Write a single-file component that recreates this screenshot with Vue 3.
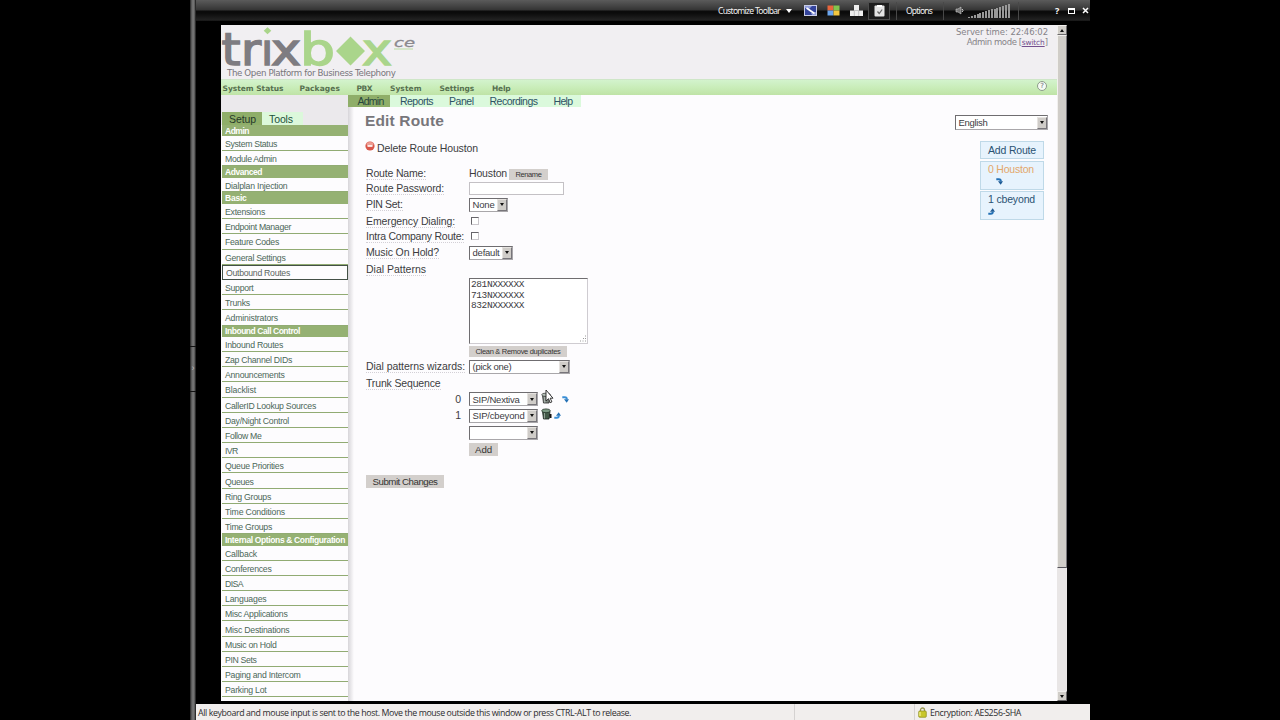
<template>
    <div class="desktop">
        <div class="dock">
            <div class="dock-handle">›</div>
        </div>
        <div class="viewer">
            <header class="toolbar">
                <span v-fit="62" class="tool-text">Customize Toolbar</span>
                <i class="caret"></i>
                <svg class="tool-icon first" viewBox="0 0 13 11">
                    <rect x=".5" y=".5" width="12" height="10" fill="#34449c" stroke="#c9cde6" />
                    <path d="M1 1h7L5 4 1 3zM12 10H8l-1-2 5-1z" fill="#8f9bd8" />
                    <path d="M2.500 3l8 5.500" stroke="#fff" stroke-width="1.6" />
                </svg>
                <svg class="tool-icon" viewBox="0 0 13 11">
                    <rect x=".5" y=".5" width="6" height="5" fill="#e8653c" />
                    <rect x="6.5" y=".5" width="6" height="5" fill="#82c44e" />
                    <rect x=".5" y="5.5" width="6" height="5" fill="#6ba6ee" />
                    <rect x="6.5" y="5.5" width="6" height="5" fill="#f2c640" />
                </svg>
                <svg class="tool-icon" viewBox="0 0 13 11">
                    <path d="M4 0h5v5.500H4zM0 5.500h13V11H0z" fill="#eee" />
                    <path d="M4.300 6v5M8.700 6v5M4 5.500h5" stroke="#a5a5a5" stroke-width=".6" />
                </svg>
                <div class="tool-active">
                    <svg class="clip-icon" viewBox="0 0 11 12">
                        <rect x=".5" y=".5" width="10" height="11" rx="1" fill="#e4e4e4" />
                        <rect x="3" y="0" width="5" height="2" fill="#fff" />
                        <path d="M3.500 6.500l1.700 2 3-4" fill="none" stroke="#666" stroke-width="1.2" />
                    </svg>
                </div>
                <i class="tool-sep sep-a"></i>
                <span v-fit="26" class="tool-text">Options</span>
                <i class="tool-sep sep-b"></i>
                <svg class="speaker" viewBox="0 0 9 9">
                    <path d="M1 3h2l3-2v7L3 6H1z" fill="#777" stroke="#ccc" stroke-width=".6" />
                    <path d="M7 3l1 1.500-1 1.500" fill="none" stroke="#ddd" />
                </svg>
                <div class="volume">
                    <i v-for="n in 15" :key="n" :style="{ height: n * 0.95 + 'px' }"></i>
                </div>
                <i class="tool-sep sep-c"></i>
                <b class="help-mark">?</b>
                <i class="win-max"></i>
                <svg class="win-close" viewBox="0 0 7 7">
                    <path d="M1 1l5 5M6 1L1 6" stroke="#fff" stroke-width="1.5" />
                </svg>
            </header>

            <div class="host">
                <div class="page">
                    <div class="banner">
                        <svg class="logo" width="200" height="40" viewBox="221 27 200 40">
                            <g class="logo-gray">
                                <text x="221.500" y="65" textLength="19" lengthAdjust="spacingAndGlyphs">t</text>
                                <text x="241" y="65" textLength="20" lengthAdjust="spacingAndGlyphs">r</text>
                                <text x="261" y="65">ı</text>
                                <text x="271" y="65" textLength="30" lengthAdjust="spacingAndGlyphs">x</text>
                            </g>
                            <g class="logo-green">
                                <text x="300" y="65" textLength="35" lengthAdjust="spacingAndGlyphs">b</text>
                                <text x="362" y="65" textLength="30" lengthAdjust="spacingAndGlyphs">x</text>
                            </g>
                            <path d="M350.500 36.500l14.500 14.500-14.500 14.500L336 51zM267.500 27.200l3.800 3.500-3.800 3.500-3.800-3.500z" fill="#aad58b" />
                            <text class="logo-ce" x="394" y="47" textLength="21" lengthAdjust="spacingAndGlyphs">ce</text>
                            <path d="M394 49h19" stroke="#b9dba0" />
                        </svg>
                        <div class="server">
                            <div><span v-fit="92">Server time: 22:46:02</span></div>
                            <div><span v-fit="55">Admin mode [</span><span v-fit="23" class="switch">switch</span>]</div>
                        </div>
                        <div class="tagline"><span v-fit="168.500">The Open Platform for Business Telephony</span></div>
                    </div>
                    <nav class="main-nav">
                        <div v-for="item in mainNav" :key="item.text" :style="{ width: item.cell + 'px' }">
                            <span v-fit="item.w">{{ item.text }}</span>
                        </div>
                        <i class="help-round">?</i>
                    </nav>

                    <div class="body">
                        <aside class="side">
                            <div class="side-tabs">
                                <div class="side-tab on"><span v-fit="27">Setup</span></div>
                                <div class="side-tab"><span v-fit="24">Tools</span></div>
                            </div>
                            <template v-for="group in groups" :key="group.title">
                                <div class="side-head" :style="{ height: group.head + 'px' }">
                                    <span v-fit="group.w">{{ group.title }}</span>
                                </div>
                                <div
                                    v-for="item in group.items"
                                    :key="item[0]"
                                    :class="['side-item', { current: item[0] === 'Outbound Routes' }]"
                                    :style="{ height: group.row + 'px' }"
                                >
                                    <span v-fit="item[1]">{{ item[0] }}</span>
                                </div>
                            </template>
                        </aside>

                        <main class="main">
                            <nav class="sub-nav">
                                <div class="on"><span v-fit="26">Admin</span></div>
                                <div><span v-fit="33">Reports</span></div>
                                <div><span v-fit="24.500">Panel</span></div>
                                <div><span v-fit="48">Recordings</span></div>
                                <div><span v-fit="19">Help</span></div>
                            </nav>
                            <div class="content">
                                <section class="edit">
                                    <h1><span v-fit="79">Edit Route</span></h1>
                                    <div class="delete">
                                        <svg width="10" height="10" viewBox="0 0 10 10">
                                            <circle cx="5" cy="5" r="4.600" fill="#d9564a" />
                                            <ellipse cx="5" cy="3" rx="3.500" ry="2" fill="#ee9d93" />
                                            <rect x="2.500" y="4.200" width="5" height="1.600" fill="#fff" />
                                        </svg>
                                        <span v-fit="101">Delete Route Houston</span>
                                    </div>

                                    <div class="row h15">
                                        <label><span v-fit="60" class="tip">Route Name:</span></label>
                                        <span v-fit="38">Houston</span>
                                        <button class="rename"><span v-fit="26">Rename</span></button>
                                    </div>
                                    <div class="row h15">
                                        <label><span v-fit="78" class="tip">Route Password:</span></label>
                                        <div class="input"></div>
                                    </div>
                                    <div class="row h17">
                                        <label><span v-fit="36.500" class="tip">PIN Set:</span></label>
                                        <div class="select w39"><span v-fit="22">None</span><i></i></div>
                                    </div>
                                    <div class="row h16">
                                        <label><span v-fit="89" class="tip">Emergency Dialing:</span></label>
                                        <div class="check"></div>
                                    </div>
                                    <div class="row h15">
                                        <label><span v-fit="98" class="tip">Intra Company Route:</span></label>
                                        <div class="check"></div>
                                    </div>
                                    <div class="row h17">
                                        <label><span v-fit="73" class="tip">Music On Hold?</span></label>
                                        <div class="select w44"><span v-fit="27">default</span><i></i></div>
                                    </div>
                                    <div class="row h16">
                                        <label><span v-fit="60" class="tip">Dial Patterns</span></label>
                                    </div>
                                    <div class="row h67">
                                        <label></label>
                                        <div class="textarea">
                                            <div v-for="p in patterns" :key="p"><span v-fit="53">{{ p }}</span></div>
                                            <svg width="8" height="8" viewBox="0 0 8 8">
                                                <path d="M6 1h1M4 3.500h1M6 3.500h1M1 6h1M3.500 6h1M6 6h1" stroke="#999" />
                                            </svg>
                                        </div>
                                    </div>
                                    <div class="row h14">
                                        <label></label>
                                        <button class="clean"><span v-fit="85">Clean &amp; Remove duplicates</span></button>
                                    </div>
                                    <div class="row h17">
                                        <label><span v-fit="99" class="tip">Dial patterns wizards:</span></label>
                                        <div class="select w101"><span v-fit="39">(pick one)</span><i></i></div>
                                    </div>
                                    <div class="row h16">
                                        <label><span v-fit="74.500" class="tip">Trunk Sequence</span></label>
                                    </div>
                                    <div class="row h16">
                                        <label class="num">0</label>
                                        <div class="select w69"><span v-fit="47">SIP/Nextiva</span><i></i></div>
                                        <svg class="trash" viewBox="0 0 12 12">
                                            <path d="M1.500 3.500h7.500l-1 7.500H2.500z" fill="#7d8780" stroke="#2a2a2a" stroke-width=".8" />
                                            <path d="M3.800 5v5.500" stroke="#ccd3ce" stroke-width=".8" />
                                            <ellipse cx="5" cy="2.800" rx="4.300" ry="1.700" fill="#b4c0b7" stroke="#444" stroke-width=".8" />
                                        </svg>
                                        <svg class="arrow down" viewBox="0 0 7 7">
                                            <path d="M.3 1.300h2.500c1.500 0 2 .7 2 2" fill="none" stroke="#3a8fd6" stroke-width="2" />
                                            <path d="M2 3.300h5L4.700 6.800z" fill="#2370b5" />
                                        </svg>
                                        <svg class="cursor" width="9" height="15" viewBox="0 0 9 15">
                                            <path d="M1 1v11l2.500-2.300 1.700 4 1.700-.8-1.700-3.700H8z" fill="#fff" stroke="#222" stroke-width=".9" />
                                        </svg>
                                    </div>
                                    <div class="row h17">
                                        <label class="num">1</label>
                                        <div class="select w69"><span v-fit="52">SIP/cbeyond</span><i></i></div>
                                        <svg class="trash" viewBox="0 0 12 12">
                                            <path d="M1.500 3.500h7.500l-1 7.500H2.500z" fill="#435a48" stroke="#1c251e" stroke-width=".8" />
                                            <path d="M3.500 5v5.500" stroke="#a6b3a9" stroke-width=".8" />
                                            <ellipse cx="5" cy="2.800" rx="4.300" ry="1.900" fill="#7d9b85" stroke="#27352b" stroke-width=".8" />
                                            <path d="M9.500 6v4" stroke="#111" stroke-width="2" />
                                        </svg>
                                        <svg class="arrow up" viewBox="0 0 7 7">
                                            <path d="M.3 5.700h2.500c1.500 0 2-.7 2-2" fill="none" stroke="#3a8fd6" stroke-width="2" />
                                            <path d="M2 3.700h5L4.700.2z" fill="#2370b5" />
                                        </svg>
                                    </div>
                                    <div class="row h17">
                                        <label></label>
                                        <div class="select w69"><span></span><i></i></div>
                                    </div>
                                    <div class="row h17">
                                        <label></label>
                                        <button class="add"><span v-fit="17">Add</span></button>
                                    </div>
                                    <button class="submit"><span v-fit="65">Submit Changes</span></button>
                                </section>

                                <section class="routes">
                                    <div class="select lang"><span v-fit="29">English</span><i></i></div>
                                    <div class="route new"><span v-fit="48">Add Route</span></div>
                                    <div class="route active">
                                        <span v-fit="46">0 Houston</span>
                                        <svg class="arrow" viewBox="0 0 7 7">
                                            <path d="M.3 1.300h2.500c1.500 0 2 .7 2 2" fill="none" stroke="#2370b5" stroke-width="2" />
                                            <path d="M2 3.300h5L4.700 6.800z" fill="#1d5a94" />
                                        </svg>
                                    </div>
                                    <div class="route">
                                        <span v-fit="47">1 cbeyond</span>
                                        <svg class="arrow" viewBox="0 0 7 7">
                                            <path d="M.3 5.700h2.500c1.500 0 2-.7 2-2" fill="none" stroke="#2370b5" stroke-width="2" />
                                            <path d="M2 3.700h5L4.700.2z" fill="#1d5a94" />
                                        </svg>
                                    </div>
                                </section>
                            </div>
                        </main>
                    </div>
                </div>
                <div class="scrollbar">
                    <i class="sb-btn up"></i>
                    <i class="sb-thumb"></i>
                    <i class="sb-btn down"></i>
                </div>
            </div>

            <footer class="status">
                <div class="status-msg"><span v-fit="433">All keyboard and mouse input is sent to the host. Move the mouse outside this window or press CTRL-ALT to release.</span></div>
                <div class="status-mid"></div>
                <div class="status-enc">
                    <svg width="9" height="11" viewBox="0 0 9 11">
                        <path d="M2.500 5V3a2 2 0 014 0v2" fill="none" stroke="#9a9a50" stroke-width="1.300" />
                        <rect x=".7" y="4" width="7.600" height="6.300" rx="1" fill="#c8c62c" stroke="#8d8d1c" stroke-width=".7" />
                        <path d="M2 5v4" stroke="#f1f08c" stroke-width="1.300" />
                    </svg>
                    <span v-fit="91">Encryption: AES256-SHA</span>
                </div>
            </footer>
        </div>
    </div>
</template>

<script setup>
// v-fit="width": spread or tighten the letters so the label takes up that width
const vFit = {
    mounted(el, { value }) {
        const natural = el.getBoundingClientRect().width;
        el.style.letterSpacing = (value - natural) / el.textContent.length + 'px';
    }
};

const mainNav = [
    { text: 'System Status', w: 61, cell: 77 },
    { text: 'Packages', w: 40.5, cell: 57 },
    { text: 'PBX', w: 15.5, cell: 33.5 },
    { text: 'System', w: 31.5, cell: 49.5 },
    { text: 'Settings', w: 34.5, cell: 52.5 },
    { text: 'Help', w: 18.5, cell: 30 }
];

const groups = [
    {
        title: 'Admin', w: 24, head: 11, row: 15,
        items: [['System Status', 52], ['Module Admin', 51.5]]
    },
    {
        title: 'Advanced', w: 37, head: 12, row: 14,
        items: [['Dialplan Injection', 62.5]]
    },
    {
        title: 'Basic', w: 21.5, head: 12, row: 15.2,
        items: [
            ['Extensions', 40], ['Endpoint Manager', 66], ['Feature Codes', 54], ['General Settings', 60.5],
            ['Outbound Routes', 64], ['Support', 28.5], ['Trunks', 25], ['Administrators', 53]
        ]
    },
    {
        title: 'Inbound Call Control', w: 75, head: 11.4, row: 15.18,
        items: [
            ['Inbound Routes', 58], ['Zap Channel DIDs', 67], ['Announcements', 59.5], ['Blacklist', 31],
            ['CallerID Lookup Sources', 91], ['Day/Night Control', 64], ['Follow Me', 36.5], ['IVR', 12.5],
            ['Queue Priorities', 58.5], ['Queues', 28.5], ['Ring Groups', 46], ['Time Conditions', 60],
            ['Time Groups', 47]
        ]
    },
    {
        title: 'Internal Options & Configuration', w: 120, head: 11.4, row: 15.2,
        items: [
            ['Callback', 32], ['Conferences', 46.5], ['DISA', 18], ['Languages', 41.5],
            ['Misc Applications', 62.5], ['Misc Destinations', 64.5], ['Music on Hold', 51.5], ['PIN Sets', 31.5],
            ['Paging and Intercom', 75.5], ['Parking Lot', 41.5]
        ]
    }
];

const patterns = ['281NXXXXXX', '713NXXXXXX', '832NXXXXXX'];
</script>

<style>
body {
    margin: 0;
    background: #000;
}
</style>

<style scoped>
* {
    box-sizing: border-box;
}

.desktop {
    display: flex;
    width: 1280px;
    height: 720px;
    padding-left: 190px;
    overflow: hidden;
    background: #000;
    font-family: "Liberation Sans", Arial, sans-serif;
    font-size: 10.5px;
    color: #3c3c3f;
    white-space: nowrap;
}

span {
    display: inline-block;
    flex: none;
}

svg {
    flex: none;
}

/* left dock strip */
.dock {
    width: 6px;
    padding-top: 346px;
    background: linear-gradient(90deg, #222 0, #444 1px, #6c6c6c 2px, #757575 4px, #444 5px, #111 6px);
}

.dock-handle {
    height: 46px;
    border: solid #111;
    border-width: 1px 0;
    font-size: 9px;
    line-height: 42px;
    color: #bbb;
    text-align: center;
}

.viewer {
    display: flex;
    flex-direction: column;
    width: 894px;
}

/* toolbar */
.toolbar {
    display: flex;
    align-items: center;
    flex: none;
    height: 21px;
    padding-left: 522px;
    background: linear-gradient(#5b5b5b 0, #404040 7px, #343434 10px, #0b0b0b 11px, #0b0b0b 13px, #222 20px, #111 21px);
}

.tool-text {
    font: 8.5px/20px "Noto Sans", sans-serif;
    color: #f2f2f2;
}

.caret {
    margin-left: 6px;
    border: solid transparent;
    border-width: 4px 3px 0;
    border-top-color: #fff;
}

.tool-icon {
    width: 13px;
    height: 11px;
    margin-left: 10px;
}

.tool-icon.first {
    margin-left: 12px;
}

.tool-active {
    display: flex;
    align-items: center;
    justify-content: center;
    width: 22px;
    height: 18px;
    margin-left: 5px;
    border: 1px solid #4c4c4c;
    background: #1c1c1c;
}

.clip-icon {
    width: 11px;
    height: 12px;
}

.tool-sep {
    width: 1px;
    height: 18px;
    background: #484848;
}

.sep-a {
    margin: 0 9px 0 6px;
}

.sep-b {
    margin: 0 11px 0 11px;
}

.sep-c {
    margin: 0 36px 0 8px;
}

.speaker {
    width: 9px;
    height: 9px;
}

.volume {
    display: flex;
    align-items: flex-end;
    justify-content: space-between;
    width: 42px;
    height: 15px;
    margin-left: 4px;
}

.volume i {
    width: 2px;
    background: #999;
}

.help-mark {
    width: 5px;
    font: bold 9px/20px "Noto Sans", sans-serif;
    color: #fff;
}

.win-max {
    width: 7px;
    height: 6px;
    margin-left: 8px;
    border: 1px solid #fff;
    border-top-width: 2px;
}

.win-close {
    width: 7px;
    height: 7px;
    margin-left: 7px;
}

/* remote page */
.host {
    display: flex;
    flex: none;
    width: 846px;
    height: 676px;
    margin: 4px 0 0 25px;
}

.page {
    display: flex;
    flex-direction: column;
    width: 836px;
    overflow: hidden;
    background: #fdfcfe;
}

.banner {
    flex: none;
    display: grid;
    grid-template-columns: 1fr auto;
    grid-template-rows: 42px 12px;
    height: 54px;
    background: #f1eff2;
}

.logo {
    margin-top: 2px;
    overflow: visible;
}

.logo text {
    font: 44px "DejaVu Sans", sans-serif;
    stroke-width: 1.5;
}

.logo-gray {
    fill: #7e7c81;
    stroke: #7e7c81;
}

.logo-green {
    fill: #aad58b;
    stroke: #aad58b;
}

.logo .logo-ce {
    font: italic 12.5px "DejaVu Sans", sans-serif;
    fill: #8b898e;
    stroke: #8b898e;
    stroke-width: .3;
}

.server {
    padding: 2px 9px 0 0;
    font: 8.5px/10px "DejaVu Sans", Verdana, sans-serif;
    color: #858388;
    text-align: right;
}

.switch {
    font-size: 7.5px;
    color: #74508f;
    text-decoration: underline;
}

.tagline {
    padding-left: 6px;
    font: 8.7px/12px "DejaVu Sans", sans-serif;
    color: #77757b;
}

.main-nav {
    display: flex;
    align-items: center;
    flex: none;
    height: 16px;
    padding: 1px 0 0 1.5px;
    border-top: 1px solid #cfe6c8;
    background: linear-gradient(#d3f3cd, #c9edb9 50%, #bfe3a6);
    font: bold 7.5px "DejaVu Sans", Verdana, sans-serif;
    color: #56704f;
}

.help-round {
    width: 10px;
    height: 10px;
    margin: -5px 10px 0 auto;
    border: 1px solid #8d9c8b;
    border-radius: 50%;
    background: #f5fbf3;
    font: 7px/8px "DejaVu Sans", sans-serif;
    color: #667;
    text-align: center;
}

.body {
    display: flex;
    flex: 1;
    min-height: 0;
}

/* sidebar */
.side {
    width: 127px;
    padding-left: 1px;
    background: #fdfcfe;
}

.side-tabs {
    display: flex;
    align-items: flex-end;
    height: 30px;
    margin-left: -1px;
    padding-left: 1px;
    background: #ebe9ec;
}

.side-tab {
    width: 41px;
    height: 13px;
    padding-left: 7px;
    background: #dcf8db;
    font-size: 10.5px;
    line-height: 14px;
    color: #21503a;
}

.side-tab.on {
    width: 40px;
    background: #8fae69;
    color: #27382a;
}

.side-head {
    display: flex;
    align-items: center;
    padding-left: 3px;
    background: #95b173;
    font-size: 8.5px;
    font-weight: bold;
    color: #fff;
}

.side-item {
    display: flex;
    align-items: center;
    padding: 2px 0 0 3px;
    border-bottom: 1px solid #91ab73;
    font-size: 8.7px;
    color: #4b6758;
}

.side-item.current {
    border: 1px solid #435046;
    color: #5b6561;
}

/* main column */
.main {
    flex: 1;
    background: linear-gradient(90deg, #d7d5d9, #fdfcfe 6px);
}

.sub-nav {
    display: flex;
    width: 233px;
    height: 12px;
    background: #dbf9dc;
    line-height: 13px;
    color: #2d5365;
}

.sub-nav div {
    flex: none;
    margin-right: 16px;
}

.sub-nav .on {
    width: 42px;
    margin-right: 10px;
    padding-left: 9.5px;
    background: #8fae69;
    color: #27473d;
}

.content {
    display: flex;
    justify-content: space-between;
    padding: 0 9px 0 18px;
}

.edit {
    width: 300px;
    line-height: 13px;
}

h1 {
    height: 28px;
    margin: 0 0 0 -1px;
    font-size: 15.5px;
    line-height: 27px;
    color: #78767b;
}

.delete {
    display: flex;
    height: 31px;
    margin-left: -1px;
}

.delete svg {
    margin: 6px 2px 0 0;
}

.delete span {
    line-height: 26px;
}

.row {
    display: flex;
    align-items: center;
}

.h14 { height: 14px; }
.h15 { height: 15px; }
.h16 { height: 16px; }
.h17 { height: 17px; }
.h67 { height: 67px; }

.row label {
    flex: none;
    width: 103px;
}

.row .num {
    padding-right: 8px;
    text-align: right;
}

.tip {
    height: 13px;
    border-bottom: 1px dotted #d3d0d6;
}

button {
    display: flex;
    align-items: center;
    justify-content: center;
    height: 13px;
    padding: 0;
    border: 0;
    background: #d3cfcc;
    font: 9.7px "Liberation Sans", Arial, sans-serif;
    color: #333;
}

.rename {
    width: 39px;
    height: 11px;
    margin: 2px 0 0 2px;
    font-size: 7.5px;
}

.clean {
    width: 98px;
    height: 11px;
    font-size: 7.5px;
}

.add {
    width: 29px;
}

.submit {
    width: 78px;
    margin-top: 17px;
}

.input {
    width: 95px;
    height: 13px;
    border: 1px solid #c4c1c5;
    background: #fff;
}

.select {
    display: flex;
    flex: none;
    align-items: center;
    justify-content: space-between;
    height: 14px;
    padding-left: 2.5px;
    border: 1px solid;
    border-color: #6f6d70 #a9a7aa #a9a7aa #6f6d70;
    background: #fff;
    font-size: 9.5px;
}

.select i {
    display: flex;
    align-items: center;
    justify-content: center;
    width: 10px;
    height: 12px;
    border: 1px solid;
    border-color: #e6e3e0 #77757a #77757a #e6e3e0;
    background: #cfccc8;
}

.select i::after,
.sb-btn::after {
    content: "";
    border: solid transparent;
    border-width: 3px 2.5px 0;
    border-top-color: #111;
}

.w39 { width: 39px; }
.w44 { width: 44px; }
.w69 { width: 69px; }
.w101 { width: 101px; }

.check {
    width: 8px;
    height: 8px;
    margin: -1px 0 0 2px;
    border: 1px solid;
    border-color: #67656a #c9c6cb #c9c6cb #67656a;
    background: #fff;
}

.textarea {
    position: relative;
    width: 119px;
    height: 66px;
    padding: 1.5px 1px;
    border: 1px solid;
    border-color: #6f6d70 #cfccd1 #cfccd1 #6f6d70;
    background: #fff;
    font: 9.5px/10.6px "Liberation Mono", "Courier New", monospace;
}

.textarea svg {
    position: absolute;
    right: 0;
    bottom: 0;
}

.trash {
    width: 12px;
    height: 12px;
    margin: -3px 0 0 3px;
}

.arrow {
    width: 7px;
    height: 7px;
}

.row .down {
    margin-left: 9px;
}

.row .up {
    margin-left: 1px;
}

/* mouse pointer resting on the first trash can */
.row .cursor {
    margin: -6px 0 0 -24px;
}

/* right column */
.routes {
    width: 93px;
    padding-top: 8px;
}

.lang {
    width: 93px;
    height: 15px;
    margin-bottom: 11px;
}

.route {
    display: flex;
    flex-direction: column;
    align-items: flex-start;
    width: 64px;
    height: 29px;
    margin: 0 0 1px 25px;
    padding-left: 7px;
    border: 1px solid #bfd9e8;
    background: #e7f3fd;
    line-height: 14px;
    color: #2a5272;
}

.route.new {
    height: 18px;
    margin-bottom: 2px;
    line-height: 16px;
}

.active span {
    color: #e3a76a;
}

.route .arrow {
    margin-top: 2px;
}

.active .arrow {
    margin-left: 8px;
}

/* scrollbar */
.scrollbar {
    display: flex;
    flex-direction: column;
    width: 10px;
    background: #e9e6e6;
}

.sb-btn {
    display: flex;
    align-items: center;
    justify-content: center;
    height: 10px;
    border: 1px solid;
    border-color: #f2f0ee #6b696b #6b696b #f2f0ee;
    background: #d0cdc8;
}

.sb-btn.up::after {
    transform: rotate(180deg);
}

.sb-btn.down {
    margin-top: auto;
}

.sb-thumb {
    height: 533px;
    border: 1px solid;
    border-color: #f2f0ee #77757a #55535a #f2f0ee;
    background: #d0cdc8;
}

/* status bar */
.status {
    display: flex;
    flex: none;
    height: 17px;
    margin-top: 3px;
    background: #f1eeed;
    font: 8.8px/18px "Open Sans", "Noto Sans", sans-serif;
    color: #2c2c2e;
}

.status-msg {
    width: 599px;
    padding-left: 2px;
    border-right: 1px solid #d5d2d1;
}

.status-mid {
    width: 120px;
    border-right: 1px solid #d5d2d1;
}

.status-enc {
    display: flex;
    align-items: center;
    gap: 3px;
    padding-left: 3px;
}
</style>
